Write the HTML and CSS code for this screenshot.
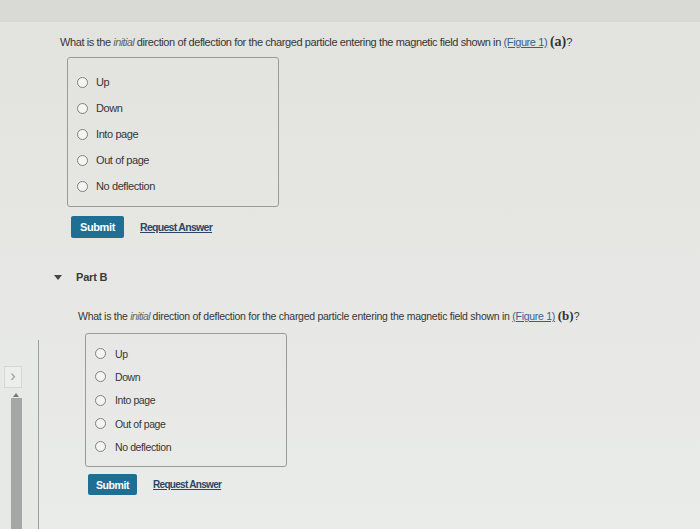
FILE: index.html
```html
<!DOCTYPE html>
<html>
<head>
<meta charset="utf-8">
<link rel="stylesheet" href="styles.css">
</head>
<body>
<div class="page">
  <div class="topband"></div>
  <section class="part part-a">
    <p class="question">What is the <em>initial</em> direction of deflection for the charged particle entering the magnetic field shown in <a class="fig">(Figure 1)</a> <b class="var">(a)</b>?</p>
    <div class="choices">
      <label class="choice"><span class="radio"></span><span>Up</span></label>
      <label class="choice"><span class="radio"></span><span>Down</span></label>
      <label class="choice"><span class="radio"></span><span>Into page</span></label>
      <label class="choice"><span class="radio"></span><span>Out of page</span></label>
      <label class="choice"><span class="radio"></span><span>No deflection</span></label>
    </div>
    <div class="actions">
      <span class="submit">Submit</span>
      <a class="request">Request Answer</a>
    </div>
  </section>

  <div class="part-head"><span class="caret"></span><span class="part-title">Part B</span></div>

  <section class="part part-b">
    <p class="question">What is the <em>initial</em> direction of deflection for the charged particle entering the magnetic field shown in <a class="fig">(Figure 1)</a> <b class="var">(b)</b>?</p>
    <div class="choices">
      <label class="choice"><span class="radio"></span><span>Up</span></label>
      <label class="choice"><span class="radio"></span><span>Down</span></label>
      <label class="choice"><span class="radio"></span><span>Into page</span></label>
      <label class="choice"><span class="radio"></span><span>Out of page</span></label>
      <label class="choice"><span class="radio"></span><span>No deflection</span></label>
    </div>
    <div class="actions">
      <span class="submit">Submit</span>
      <a class="request">Request Answer</a>
    </div>
  </section>

  <aside class="drawer">
    <span class="drawer-tab">&#8250;</span>
    <span class="drawer-scroll"><span class="drawer-arrow"></span></span>
  </aside>
</div>
</body>
</html>
```

FILE: styles.css
```css
html, body {
  margin: 0;
  padding: 0;
}
body {
  width: 700px;
  height: 529px;
  overflow: hidden;
  font-family: "Liberation Sans", Arial, sans-serif;
  color: #363636;
  background: linear-gradient(180deg, #e2e2df 0%, #e6e6e3 45%, #eaecea 100%);
}
.page {
  position: relative;
  height: 529px;
}
.topband {
  height: 22px;
  background: #d9d9d5;
  border-bottom: 1px solid #e4e4e1;
}
.question {
  margin: 0;
  font-size: 11px;
  letter-spacing: -0.4px;
  line-height: 14px;
  white-space: nowrap;
}
.question em {
  font-style: italic;
  font-weight: normal;
  color: #666;
  letter-spacing: -0.6px;
}
.fig {
  color: #3d5f8e;
  text-decoration: underline;
}
.var {
  font-family: "Liberation Serif", "Times New Roman", serif;
  font-size: 14px;
  letter-spacing: 0;
  font-weight: bold;
  color: #333;
}
.part-a {
  padding: 12px 0 0 60px;
}
.part-a .choices {
  margin: 8px 0 0 7px;
  width: 210px;
  height: 130px;
  padding: 11px 0 7px 0;
}
.choices {
  border: 1px solid #9a9a98;
  border-radius: 3px;
  display: flex;
  flex-direction: column;
}
.choice {
  display: flex;
  align-items: center;
  gap: 8px;
  height: 26px;
  padding-left: 9px;
  font-size: 11px;
  letter-spacing: -0.4px;
}
.radio {
  width: 9px;
  height: 9px;
  border: 1px solid #80807e;
  border-radius: 50%;
  background: #f4f4f2;
  flex: none;
}
.actions {
  display: flex;
  align-items: center;
  gap: 16px;
}
.part-a .actions {
  margin: 9px 0 0 11px;
}
.submit {
  display: inline-flex;
  align-items: center;
  justify-content: center;
  background: #1f6e94;
  color: #fff;
  font-weight: bold;
  font-size: 11px;
  letter-spacing: -0.4px;
  width: 53px;
  height: 22px;
  border-radius: 2px;
}
.request {
  color: #2c4766;
  text-decoration: underline;
  font-weight: bold;
  font-size: 10.5px;
  letter-spacing: -0.7px;
}
.part-head {
  display: flex;
  align-items: center;
  margin: 31px 0 0 54px;
  height: 16px;
}
.caret {
  width: 0;
  height: 0;
  border-left: 4px solid transparent;
  border-right: 4px solid transparent;
  border-top: 5px solid #444;
  margin-right: 14px;
}
.part-title {
  font-size: 11px;
  font-weight: bold;
  color: #3a3a3a;
  letter-spacing: -0.2px;
}
.part-b {
  padding: 24px 0 0 78px;
}
.part-b .question {
  font-size: 10.5px;
  letter-spacing: -0.27px;
}
.part-b .var {
  font-size: 13px;
  letter-spacing: 0;
}
.part-b .choices {
  margin: 10px 0 0 7px;
  width: 200px;
  height: 118px;
  padding: 8px 0 6px 0;
}
.part-b .choice {
  height: 23.3px;
  padding-left: 9px;
  gap: 9px;
  font-size: 10.5px;
}
.part-b .actions {
  margin: 7px 0 0 10px;
}
.part-b .submit {
  width: 49px;
  height: 21px;
  font-size: 10.5px;
}
.part-b .request {
  font-size: 10px;
}
.drawer {
  position: absolute;
  left: 0;
  top: 340px;
  width: 38px;
  height: 189px;
  border-right: 1px solid #9aa09d;
  background: #e6e9e6;
}
.drawer-tab {
  position: absolute;
  left: 4px;
  top: 26px;
  width: 16px;
  height: 20px;
  border: 1px solid #d4d6d4;
  background: #eceeec;
  color: #9a9c9a;
  font-size: 16px;
  line-height: 18px;
  text-align: center;
}
.drawer-scroll {
  position: absolute;
  left: 11px;
  top: 58px;
  width: 11px;
  height: 131px;
  background: #a4a7a5;
}
.drawer-arrow {
  position: absolute;
  left: 2px;
  top: -5px;
  width: 0;
  height: 0;
  border-left: 3px solid transparent;
  border-right: 3px solid transparent;
  border-bottom: 4px solid #777;
}
```
